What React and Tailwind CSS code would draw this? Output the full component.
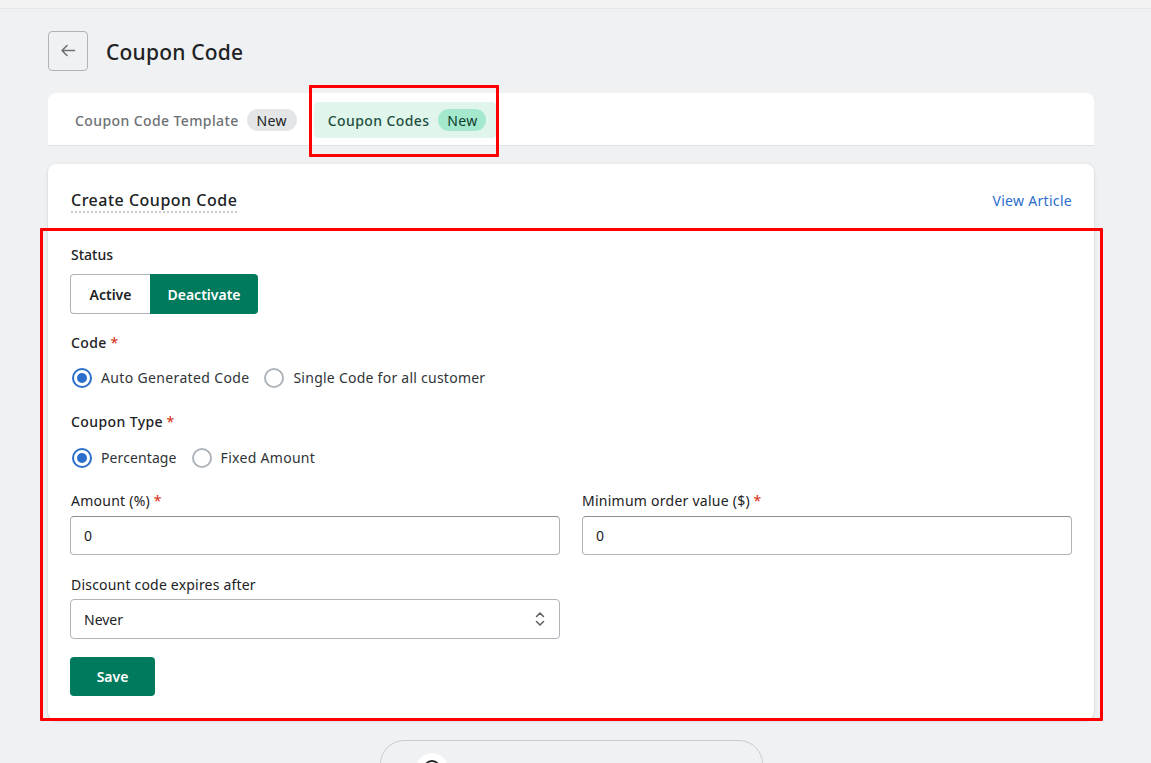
import React from "react";

const F = "font-['Noto_Sans',sans-serif]";

function Label({ children, req, cls = "tracking-[0.25px]", pad = "pl-[1px]" }) {
  return (
    <div className={`${pad} text-[14px] leading-[20px] text-[#202223] ${cls}`}>
      {children}
      {req && <span className="font-normal tracking-normal text-[#d72c0d]"> *</span>}
    </div>
  );
}

function Radio({ on, children, cls = "tracking-[0.3px]" }) {
  return (
    <label className={`flex items-center gap-[9px] text-[14px] leading-[20px] text-[#303438] ${cls}`}>
      <span className={`flex h-[20px] w-[20px] items-center justify-center rounded-full border-2 bg-white ${on ? "border-[#2c6ecb]" : "border-[#aeb4b9]"}`}>
        {on && <span className="h-[10px] w-[10px] rounded-full bg-[#2c6ecb]" />}
      </span>
      {children}
    </label>
  );
}

function Field({ label, value, pad }) {
  return (
    <div className="flex-1">
      <Label req pad={pad}>{label}</Label>
      <div className="mt-[5px] flex h-[39px] items-center rounded-[4px] border border-[#aeb4b9] border-t-[#898f94] bg-white pl-[13px] text-[14px] text-[#202223]">
        {value}
      </div>
    </div>
  );
}

export default function App() {
  return (
    <div className={`relative h-[763px] w-full overflow-hidden bg-[#f0f1f3] ${F}`}>
      <div className="h-[9px] border-b border-[#e6e7e9] bg-[#f3f3f3]" />
      <div className="pr-[57px] pl-[48px]">
        <div className="mt-[22px] flex h-[40px] items-center gap-[18px]">
          <button className="flex h-[40px] w-[40px] items-center justify-center rounded-[4px] border border-[#aeb4b9] text-[#6d7175]">
            <svg width="16" height="16" viewBox="0 0 16 16" fill="none" stroke="currentColor" strokeWidth="1.6" strokeLinecap="round" strokeLinejoin="round">
              <path d="M14.500 7.500H2M7 2.500l-5 5 5 5" />
            </svg>
          </button>
          <h1 className="pt-[2px] text-[21px] leading-[28px] font-medium tracking-[0.2px] text-[#202223]">Coupon Code</h1>
        </div>

        <div className="mt-[22px] flex h-[53px] items-start rounded-t-[8px] border-b border-[#e1e3e5] bg-white pt-[9px] pl-[9px]">
          <div className="flex h-[36px] items-center gap-[8px] px-[18px] text-[14px] font-medium tracking-[0.4px] text-[#6d7175]">
            Coupon Code Template
            <span className="flex h-[22px] w-[50px] items-center justify-center rounded-full bg-[#e4e5e7] font-normal text-[#202223]">New</span>
          </div>
          <div className="ml-[-1px] flex h-[36px] items-center gap-[9px] rounded-[4px] bg-[#e0f6ec] pr-[10px] pl-[14px] text-[14px] font-medium tracking-[0.4px] text-[#1f4f3e]">
            Coupon Codes
            <span className="flex h-[22px] w-[48px] items-center justify-center rounded-full bg-[#a4e8cd] font-normal text-[#0d3d2c]">New</span>
          </div>
        </div>

        <div className="mt-[18px] h-[556px] rounded-[8px] bg-white px-[22px] shadow-[0_0_5px_rgba(23,24,24,0.05),0_1px_2px_rgba(0,0,0,0.15)]">
          <div className="flex items-center justify-between pt-[25px]">
            <h2 className="ml-[1px] border-b-2 border-dotted border-[#c9cccf] text-[16px] leading-[22px] font-medium tracking-[0.5px] text-[#202223]">Create Coupon Code</h2>
            <a className="text-[14px] leading-[20px] tracking-[0.3px] text-[#2c6ecb]">View Article</a>
          </div>

          <Label cls="mt-[32px] font-medium">Status</Label>
          <div className="mt-[9px] flex h-[40px] w-fit text-[14px] font-semibold">
            <div className="flex w-[80px] items-center justify-center rounded-l-[4px] border border-r-0 border-[#aeb4b9] text-[#202223]">Active</div>
            <div className="flex w-[108px] items-center justify-center rounded-r-[4px] bg-[#007a5c] text-white">Deactivate</div>
          </div>

          <Label req cls="mt-[19px] font-medium tracking-[0.4px]">Code</Label>
          <div className="mt-[15px] ml-[2px] flex items-center gap-[15px]">
            <Radio on cls="tracking-[0.35px]">Auto Generated Code</Radio>
            <Radio cls="tracking-[0.25px]">Single Code for all customer</Radio>
          </div>

          <Label req cls="mt-[24px] font-medium tracking-[0.4px]">Coupon Type</Label>
          <div className="mt-[16px] ml-[2px] flex items-center gap-[15px]">
            <Radio on cls="tracking-[0.1px]">Percentage</Radio>
            <Radio>Fixed Amount</Radio>
          </div>

          <div className="mt-[23px] flex gap-[22px]">
            <Field label="Amount (%)" value="0" />
            <Field label="Minimum order value ($)" value="0" pad="pl-0" />
          </div>

          <div className="mt-[20px] flex gap-[22px]">
            <div className="flex-1">
              <Label cls="tracking-[0.2px]">Discount code expires after</Label>
              <div className="mt-[4px] flex h-[40px] items-center justify-between rounded-[4px] border border-[#aeb4b9] bg-white pr-[13px] pl-[13px] text-[14px] text-[#202223]">
                Never
                <svg width="12" height="16" viewBox="0 0 12 16" fill="none" stroke="#5c5f62" strokeWidth="1.500" strokeLinecap="round" strokeLinejoin="round">
                  <path d="M2.500 5.500 6 2l3.500 3.500M2.500 10.500 6 14l3.500-3.500" />
                </svg>
              </div>
            </div>
            <div className="flex-1" />
          </div>

          <button className="mt-[18px] flex h-[39px] w-[85px] items-center justify-center rounded-[4px] bg-[#007a5c] text-[14px] font-semibold text-white">Save</button>
        </div>

        <div className="mt-[20px] ml-[332px] flex h-[60px] w-[383px] items-start rounded-t-[24px] border border-[#c9cccf] pt-[12px] pl-[35px]">
          <div className="flex h-[32px] w-[32px] items-center justify-center rounded-full bg-white">
            <svg width="18" height="18" viewBox="0 0 18 18" fill="none" stroke="#202223" strokeWidth="1.800">
              <circle cx="9" cy="9" r="8" />
            </svg>
          </div>
        </div>
      </div>

      <div className="absolute top-[85px] left-[309px] h-[72px] w-[190px] rounded-[1px] border-[3px] border-[#ff0000]" />
      <div className="absolute top-[228px] left-[40px] h-[493px] w-[1063px] rounded-[1px] border-[3px] border-[#ff0000]" />
    </div>
  );
}
